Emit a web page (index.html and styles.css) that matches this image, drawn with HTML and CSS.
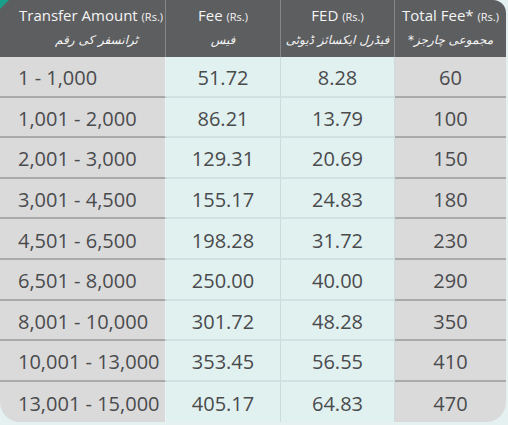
FILE: index.html
```html
<!DOCTYPE html>
<html>
<head>
<meta charset="utf-8">
<link rel="stylesheet" href="styles.css">
</head>
<body>
<div class="wrap">
  <div class="corner"></div>
  <div class="table">
    <div class="hd c1"><div class="en">Transfer Amount <small>(Rs.)</small></div><div class="ur">ٹرانسفر کی رقم</div></div>
    <div class="hd c2"><div class="en">Fee <small>(Rs.)</small></div><div class="ur">فیس</div></div>
    <div class="hd c3"><div class="en">FED <small>(Rs.)</small></div><div class="ur">فیڈرل ایکسائز ڈیوٹی</div></div>
    <div class="hd c4"><div class="en">Total Fee* <small>(Rs.)</small></div><div class="ur">مجموعی چارجز*</div></div>

    <div class="cell gray left">1 - 1,000</div><div class="cell teal">51.72</div><div class="cell teal">8.28</div><div class="cell gray">60</div>
    <div class="cell gray left">1,001 - 2,000</div><div class="cell teal">86.21</div><div class="cell teal">13.79</div><div class="cell gray">100</div>
    <div class="cell gray left">2,001 - 3,000</div><div class="cell teal">129.31</div><div class="cell teal">20.69</div><div class="cell gray">150</div>
    <div class="cell gray left">3,001 - 4,500</div><div class="cell teal">155.17</div><div class="cell teal">24.83</div><div class="cell gray">180</div>
    <div class="cell gray left">4,501 - 6,500</div><div class="cell teal">198.28</div><div class="cell teal">31.72</div><div class="cell gray">230</div>
    <div class="cell gray left">6,501 - 8,000</div><div class="cell teal">250.00</div><div class="cell teal">40.00</div><div class="cell gray">290</div>
    <div class="cell gray left">8,001 - 10,000</div><div class="cell teal">301.72</div><div class="cell teal">48.28</div><div class="cell gray">350</div>
    <div class="cell gray left">10,001 - 13,000</div><div class="cell teal">353.45</div><div class="cell teal">56.55</div><div class="cell gray">410</div>
    <div class="cell gray left last">13,001 - 15,000</div><div class="cell teal last">405.17</div><div class="cell teal last">64.83</div><div class="cell gray last">470</div>
  </div>
</div>
</body>
</html>
```
FILE: styles.css
```css
html, body {
  margin: 0;
  padding: 0;
  background: #e4f1f0;
}
.wrap {
  position: relative;
  width: 506px;
  height: 425px;
  overflow: hidden;
}
.corner {
  position: absolute;
  left: 0;
  top: 0;
  width: 0;
  height: 0;
  border-top: 9px solid #1aa08a;
  border-right: 9px solid transparent;
  z-index: 2;
}
.table {
  display: grid;
  grid-template-columns: 166px 115px 114px 111px;
  grid-template-rows: 57px repeat(9, 40.6px);
  font-family: "Open Sans", "Noto Sans", sans-serif;
  color: #4a4b4d;
  border-radius: 0 13px 20px 20px;
  overflow: hidden;
}
.hd {
  background: #5d5e60;
  color: #f4f4f4;
  text-align: center;
  border-right: 1px solid #85878a;
  display: flex;
  flex-direction: column;
  align-items: center;
  padding-top: 5px;
}
.hd.c4 { border-right: none; }
.hd.c1 { align-items: flex-start; padding-left: 19px; }
.en {
  font-size: 15px;
  line-height: 20px;
  white-space: nowrap;
}
.en small {
  font-size: 11px;
}
.ur {
  font-family: "DejaVu Sans", sans-serif;
  font-size: 12px;
  line-height: 26px;
  direction: rtl;
  font-style: italic;
  white-space: nowrap;
}
.hd.c1 .ur { align-self: center; margin-left: 9px; }
.cell {
  display: flex;
  align-items: center;
  justify-content: center;
  font-size: 20px;
  border-bottom: 2px solid #a8aaac;
  box-sizing: border-box;
  padding-top: 3px;
}
.cell.teal {
  background: #e1f1f0;
  border-bottom-color: #cfe2e1;
  border-right: 1px solid #cbdcdb;
}
.cell.gray {
  background: #dadadb;
}
.cell.left {
  justify-content: flex-start;
  padding-left: 18px;
  border-right: 1px solid #eef3f3;
}
.cell.last { border-bottom: none; }
```
